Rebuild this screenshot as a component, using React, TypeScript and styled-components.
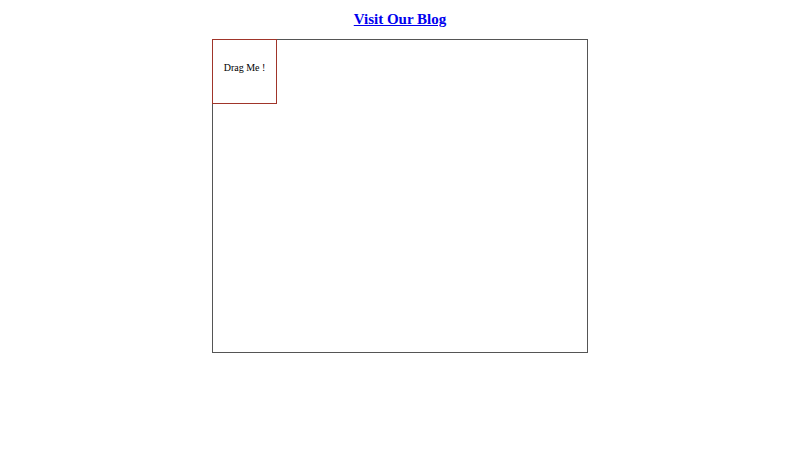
import React from "react";
import styled, { createGlobalStyle } from "styled-components";

const Global = createGlobalStyle`
  html, body { margin: 0; padding: 0; background: #fff; }
  body { font-family: "Liberation Serif", "Times New Roman", serif; }
`;

const Page = styled.div`
  display: flex;
  flex-direction: column;
  align-items: center;
`;

const Title = styled.h3`
  margin: 10px 0 10px;
  font-size: 15px;
  line-height: 19px;
  font-weight: bold;
  text-align: center;
`;

const Link = styled.a`
  color: #0000ee;
  text-decoration: underline;
`;

const Area = styled.div`
  position: relative;
  width: 374px;
  height: 312px;
  border: 1px solid #555;
`;

const Draggable = styled.div`
  position: absolute;
  left: -1px;
  top: -1px;
  width: 63px;
  height: 55px;
  padding-bottom: 8px;
  border: 1px solid #a0352a;
  display: flex;
  align-items: center;
  justify-content: center;
  font-size: 10px;
  cursor: move;
`;

export default function App() {
  return (
    <Page>
      <Global />
      <Title>
        <Link href="#">Visit Our Blog</Link>
      </Title>
      <Area>
        <Draggable>Drag Me !</Draggable>
      </Area>
    </Page>
  );
}
